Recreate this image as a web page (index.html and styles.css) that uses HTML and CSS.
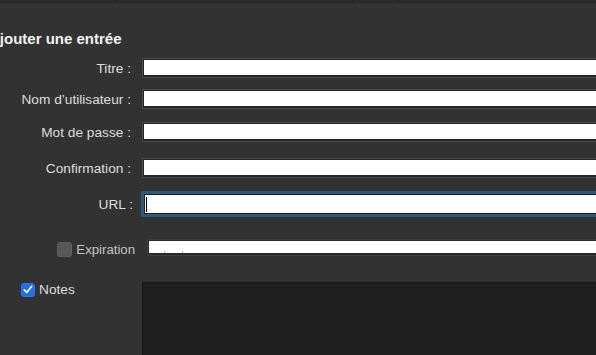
FILE: index.html
```html
<!DOCTYPE html>
<html lang="fr">
<head>
    <meta charset="UTF-8">
    <meta name="viewport" content="width=device-width, initial-scale=1.0">
    <title>Ajouter une entrée</title>
    <link rel="stylesheet" href="styles.css">
</head>
<body>
    <div class="topbar">
        <span class="tick t1"></span>
        <span class="tick t2"></span>
        <span class="tick t3"></span>
    </div>
    <div class="sheet">
        <h1 class="title">Ajouter une entrée</h1>
        <div class="row r-titre">
            <label class="label">Titre :</label>
            <div class="field"></div>
        </div>
        <div class="row r-nom">
            <label class="label">Nom d’utilisateur :</label>
            <div class="field"></div>
        </div>
        <div class="row r-mdp">
            <label class="label">Mot de passe :</label>
            <div class="field"></div>
        </div>
        <div class="row r-conf">
            <label class="label">Confirmation :</label>
            <div class="field"></div>
        </div>
        <div class="row r-url">
            <label class="label">URL :</label>
            <div class="field focused"><span class="caret"></span></div>
        </div>
        <div class="row r-exp">
            <label class="label check-label">
                <span class="checkbox"></span>
                <span class="dim">Expiration</span>
            </label>
            <div class="field date">
                <span class="seg s1"></span>
                <span class="seg s2"></span>
            </div>
        </div>
        <div class="row r-notes">
            <label class="notes-label">
                <span class="checkbox checked">
                    <svg width="10" height="9" viewBox="0 0 10 9">
                        <path d="M1.3 4.8 L3.8 7.4 L8.8 1.3" fill="none" stroke="#fff" stroke-width="1.7" stroke-linecap="round" stroke-linejoin="round"/>
                    </svg>
                </span>
                <span>Notes</span>
            </label>
            <div class="notes"></div>
        </div>
    </div>
</body>
</html>
```
FILE: styles.css
```css
html, body {
    margin: 0;
    padding: 0;
    overflow: hidden;
}
body {
    width: 596px;
    height: 355px;
    background: #323232;
    font-family: "Liberation Sans", Arial, sans-serif;
    color: #dedede;
}
.topbar {
    position: relative;
    height: 4px;
    background: #2a2a2a;
    border-bottom: 1px solid #373737;
}
.tick {
    position: absolute;
    top: 0;
    width: 1px;
    height: 1px;
    background: #1a1a1a;
}
.t1 { left: 116px; }
.t2 { left: 352px; }
.t3 { left: 398px; }
.sheet {
    width: 720px;
}
.title {
    margin: 25px 0 0 -11px;
    font-size: 15px;
    line-height: 18px;
    font-weight: bold;
    color: #f2f2f2;
}
.row {
    display: flex;
    align-items: center;
    column-gap: 11px;
}
.label {
    width: 131px;
    flex: none;
    text-align: right;
    font-size: 13.7px;
}
.field {
    flex: 1;
    height: 20px;
    box-sizing: border-box;
    background: #fff;
    border: 1px solid #4c4c4c;
    box-shadow: inset 0 0 0 1px #262626, inset 0 -1px 0 1px #262626;
    position: relative;
}
.r-titre { margin-top: 10px; }
.r-nom { margin-top: 11px; }
.r-mdp { margin-top: 13px; }
.r-conf { margin-top: 16px; }
.r-url { margin-top: 16px; }
.r-url .label { width: 133px; }
.field.focused {
    border: 1px solid #1f1f1f;
    box-shadow: 0 0 0 3px #2b5b7a;
}
.caret {
    position: absolute;
    left: 1px;
    top: 2px;
    width: 1px;
    height: 15px;
    background: #000;
}
.r-exp {
    margin-top: 25px;
    column-gap: 12px;
    align-items: flex-start;
}
.check-label {
    width: 135px;
    margin-top: 3px;
    display: flex;
    justify-content: flex-end;
    align-items: center;
    gap: 4px;
    font-size: 13.2px;
}
.dim {
    color: #c4c4c4;
}
.checkbox {
    width: 14px;
    height: 14px;
    box-sizing: border-box;
    border-radius: 3px;
    background: #575757;
    border: 1px solid #606060;
    display: flex;
    align-items: center;
    justify-content: center;
}
.check-label .checkbox {
    width: 15px;
    height: 15px;
}
.checkbox.checked {
    background: #1f6fe6;
    border-color: #2a78ee;
}
.field.date {
    height: 17px;
    border: 1px solid #3e3e3e;
    box-shadow: inset 0 0 0 1px #2a2a2a, inset 0 -1px 0 1px #2a2a2a;
}
.seg {
    position: absolute;
    bottom: 2px;
    width: 1px;
    height: 2px;
    background: #bbb;
}
.s1 { left: 16px; }
.s2 { left: 34px; }
.r-notes {
    margin-top: 25px;
    align-items: flex-start;
    column-gap: 0;
}
.notes-label {
    width: 142px;
    flex: none;
    box-sizing: border-box;
    padding-left: 21px;
    display: flex;
    align-items: center;
    gap: 4px;
    font-size: 13.7px;
}
.notes {
    flex: 1;
    height: 80px;
    background: #1e1e1e;
    border-top: 1px solid #151515;
    border-left: 1px solid #151515;
}
```
